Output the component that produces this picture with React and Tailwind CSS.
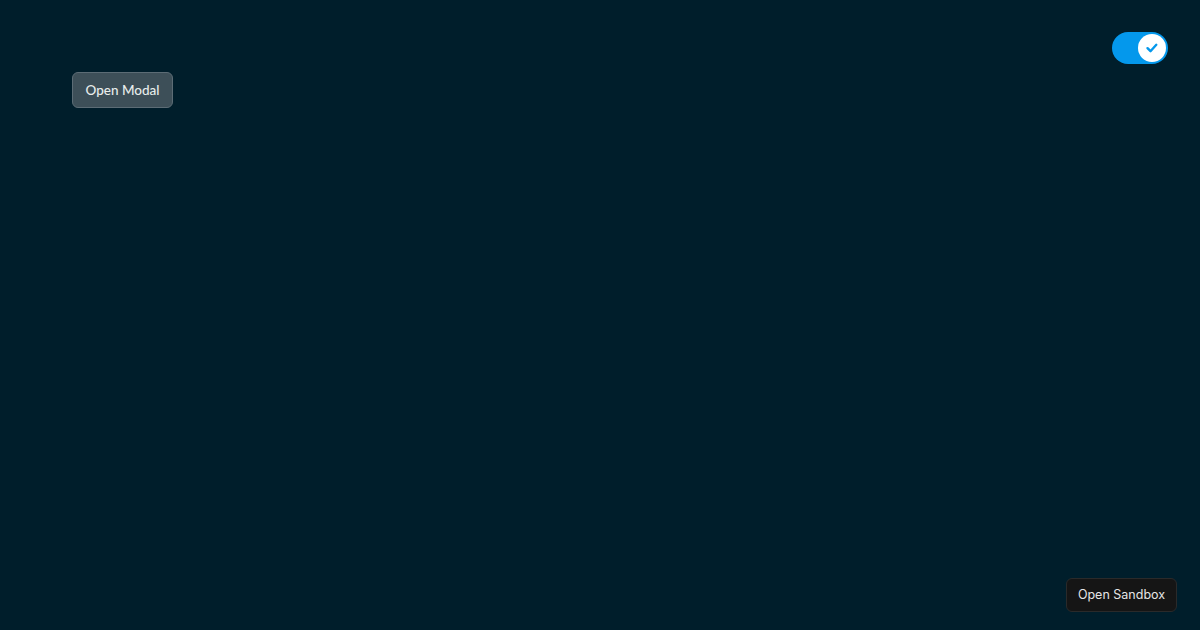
import React from "react";

const App = () => {
  return (
    <div className="relative w-[1200px] h-[630px] bg-[#001e2b] overflow-hidden">
      <div className="flex justify-end pt-8 pr-8">
        <button className="relative w-14 h-8 rounded-full bg-[#0498ec] flex items-center justify-end pr-[2px]">
          <span className="w-7 h-7 rounded-full bg-white flex items-center justify-center">
            <svg width="16" height="16" viewBox="0 0 16 16" fill="none">
              <path d="M3.5 8.2l3 3 5.8-6.4" stroke="#0498ec" strokeWidth="2.4" strokeLinecap="round" strokeLinejoin="round" />
            </svg>
          </span>
        </button>
      </div>
      <div className="pl-[72px] pt-2">
        <button
          className="h-9 w-[101px] rounded-md bg-[#3d4f58] border border-[#5c6c75] text-[#e8edeb] text-[13.5px] font-medium flex items-center justify-center"
          style={{ fontFamily: "Lato, 'Noto Sans', sans-serif" }}
        >
          Open Modal
        </button>
      </div>
      <button
        className="absolute right-[23px] bottom-[18px] h-[34px] w-[111px] rounded-md bg-[#151515] border border-[#2a2a2a] text-[#e5e5e5] text-[12.5px] flex items-center justify-center"
        style={{ fontFamily: "Inter, sans-serif" }}
      >
        Open Sandbox
      </button>
    </div>
  );
};

export default App;
